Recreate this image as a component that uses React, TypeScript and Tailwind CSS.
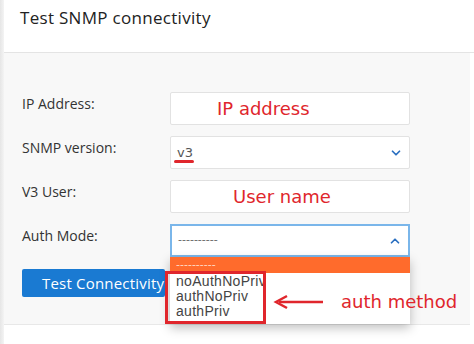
import { ChevronDown, ChevronUp } from 'lucide-react'

const labelCls = "text-[14px] text-[#333] pt-[1px] h-[33px]"

export default function App() {
  return (
    <div className="w-[474px] h-[344px] bg-white flex overflow-hidden" style={{ fontFamily: '"Open Sans", "Noto Sans", sans-serif' }}>
      {/* left shadow strip */}
      <div className="w-[4px] h-full bg-gradient-to-r from-[#e6e6e6] to-[#f4f4f4]" />

      <div className="flex-1 flex flex-col">
        {/* Header */}
        <div className="h-[53px] border-b border-[#e4e4e4] pl-[16px] pt-[5px]">
          <h1 className="text-[17px] text-[#222] tracking-[0.3px]">Test SNMP connectivity</h1>
        </div>

        {/* Body */}
        <div className="w-[466px] bg-[#f8f8f8] pl-[18px] pt-[39px] pb-[27px] border-b border-[#e8e8e8]">
          <div className="grid grid-cols-[148px_240px] gap-y-[11px]">
            <div className={labelCls}>IP Address:</div>
            <div className="h-[33px] bg-white border border-[#e2e2e2] rounded-[2px] flex items-center pl-[46px]">
              <span className="text-[18px] text-[#e0262c]" style={{ fontFamily: '"DejaVu Sans", sans-serif' }}>IP address</span>
            </div>

            <div className={labelCls}>SNMP version:</div>
            <div className="h-[33px] bg-white border border-[#e2e2e2] rounded-[2px] flex items-center justify-between pl-[6px] pr-[6px]">
              <span className="relative text-[13px] text-[#555]" style={{ fontFamily: '"DejaVu Sans", sans-serif' }}>
                v3
                <span className="absolute left-[-3px] top-[17px] w-[20px] h-[3px] bg-[#e0262c] rounded-full" />
              </span>
              <ChevronDown className="w-[14px] h-[14px] text-[#2a6fc0]" strokeWidth={3} />
            </div>

            <div className={labelCls}>V3 User:</div>
            <div className="h-[33px] bg-white border border-[#e2e2e2] rounded-[2px] flex items-center pl-[62px]">
              <span className="text-[18px] text-[#e0262c]" style={{ fontFamily: '"DejaVu Sans", sans-serif' }}>User name</span>
            </div>

            <div className={labelCls}>Auth Mode:</div>
            <div className="relative h-[33px]">
              <div className="h-[33px] bg-white border-2 border-[#7ab6ea] flex items-center justify-between pl-[6px] pr-[6px]">
                <span className="text-[11px] text-[#666]" style={{ fontFamily: '"DejaVu Sans", sans-serif' }}>----------</span>
                <ChevronUp className="w-[14px] h-[14px] text-[#2a6fc0]" strokeWidth={3} />
              </div>

              {/* open dropdown */}
              <div className="absolute left-0 top-full w-[240px] bg-white shadow-[0_4px_10px_rgba(0,0,0,0.25)] z-10" style={{ fontFamily: '"Liberation Sans", Arial, sans-serif' }}>
                <div className="h-[16px] bg-[#ff6b2c] pl-[6px] text-[11px] leading-[15px] text-[#ffd9c6]" style={{ fontFamily: '"DejaVu Sans", sans-serif' }}>----------</div>
                <div className="h-[51px] pl-[6px] pt-[1px] text-[14px] leading-[15px] tracking-[0.3px] text-[#444]">
                  <div>noAuthNoPriv</div>
                  <div>authNoPriv</div>
                  <div>authPriv</div>
                </div>
              </div>

              {/* annotation */}
              <div className="absolute left-[-5px] top-[47px] w-[101px] h-[53px] border-[3px] border-[#e0262c] z-20" />
              <div className="absolute left-[103px] top-[64px] z-20 flex items-center">
                <svg width="52" height="20" viewBox="0 0 52 20">
                  <path d="M50 10 H6" stroke="#e0262c" strokeWidth="2.5" />
                  <path d="M14 4 L3 10 L14 16" stroke="#e0262c" strokeWidth="2.5" fill="none" />
                </svg>
                <span className="ml-[16px] text-[18px] text-[#e0262c] whitespace-nowrap" style={{ fontFamily: '"DejaVu Sans", sans-serif' }}>auth method</span>
              </div>
            </div>
          </div>

          <div className="mt-[12px]">
            <button className="w-[143px] h-[28px] bg-[#1a7ad2] rounded-[2px] text-white text-[15px] pl-[20px] text-left tracking-[0.2px] whitespace-nowrap">
              Test Connectivity
            </button>
          </div>
        </div>
      </div>
    </div>
  )
}
